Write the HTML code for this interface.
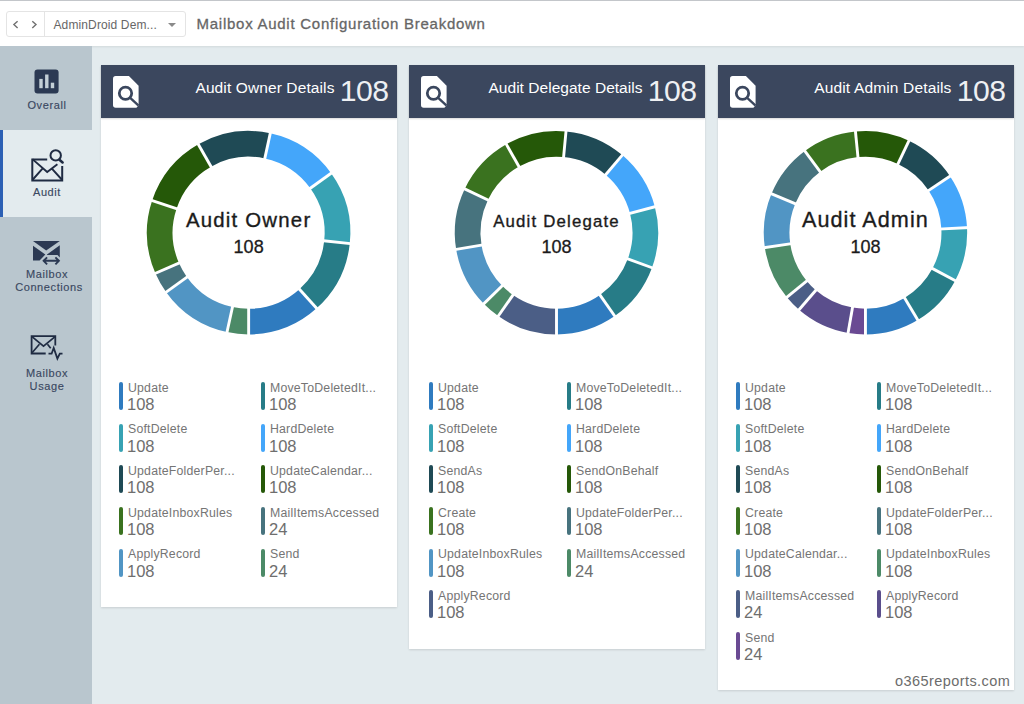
<!DOCTYPE html>
<html><head><meta charset="utf-8">
<style>
*{margin:0;padding:0;box-sizing:border-box}
html,body{width:1024px;height:704px;overflow:hidden;background:#e3ebee;font-family:"Liberation Sans",sans-serif}
.abs{position:absolute}
#topbar{position:absolute;left:0;top:0;width:1024px;height:46px;background:#fff;border-top:1px solid #c3c6ca;box-shadow:0 1px 2px rgba(0,0,0,0.08)}
#nav{position:absolute;left:6px;top:11px;width:180px;height:26px;border:1px solid #e4e4e4;border-radius:3px;background:#fff}
#navdiv{position:absolute;left:44px;top:11px;width:1px;height:26px;background:#e4e4e4}
#ddtext{position:absolute;left:53.5px;top:18.2px;font-size:12px;letter-spacing:0.12px;color:#666;white-space:nowrap}
#ddtri{position:absolute;left:167.8px;top:22.5px;width:0;height:0;border-left:4.7px solid transparent;border-right:4.7px solid transparent;border-top:4.7px solid #8a8a8a}
#title{position:absolute;left:196.5px;top:14.5px;font-size:15px;letter-spacing:0.74px;color:#666;white-space:nowrap;-webkit-text-stroke:0.3px #666}
#side{position:absolute;left:0;top:46px;width:92px;height:658px;background:#b9c6ce}
#sel{position:absolute;left:0;top:130px;width:92px;height:87px;background:#e3ebee}
#selbar{position:absolute;left:0;top:130px;width:3px;height:87px;background:#2c60b4}
.slab{position:absolute;left:1px;width:92px;text-align:center;font-size:11px;letter-spacing:0.6px;line-height:12.5px;color:#3a4861;-webkit-text-stroke:0.15px #3a4861}
.card{position:absolute;top:65px;background:#fff;box-shadow:0 1px 2px rgba(0,0,0,0.12)}
.chead{position:absolute;top:65px;height:53px;background:#3b475e;box-shadow:0 1px 1.5px rgba(0,0,0,0.15)}
.hicon{position:absolute}
.htitle{position:absolute;top:78.5px;font-size:15.5px;letter-spacing:0.28px;color:#fff;white-space:nowrap}
.hnum{position:absolute;top:74px;font-size:30.2px;color:#eef0f3;white-space:nowrap;letter-spacing:-0.5px}
.donut{position:absolute}
.ctitle{position:absolute;width:200px;line-height:1;text-align:center;color:#1b1b1b;white-space:nowrap;-webkit-text-stroke:0.35px #1b1b1b}
.cnum{position:absolute;top:236.5px;width:200px;text-align:center;font-size:18px;color:#1b1b1b;-webkit-text-stroke:0.3px #1b1b1b}
.lbar{position:absolute;width:4px;height:28px;border-radius:2px}
.llab{position:absolute;font-size:12.3px;letter-spacing:0.2px;color:#757575;white-space:nowrap}
.lval{position:absolute;font-size:16.5px;color:#6e6e6e;white-space:nowrap}
#wm{position:absolute;left:895px;top:673px;font-size:14.5px;letter-spacing:0.43px;color:#6c6c6c;white-space:nowrap}
</style></head><body>
<div id="topbar"></div>
<div id="nav"></div>
<div id="navdiv"></div>
<svg class="abs" style="left:12px;top:19px" width="10" height="12" viewBox="0 0 10 12"><path d="M5.6 2.2L1.9 5.6L5.6 9" fill="none" stroke="#707070" stroke-width="1.4"/></svg>
<svg class="abs" style="left:30px;top:19px" width="10" height="12" viewBox="0 0 10 12"><path d="M2.3 2.2L6 5.6L2.3 9" fill="none" stroke="#707070" stroke-width="1.4"/></svg>
<div id="ddtext">AdminDroid Dem...</div>
<div id="ddtri"></div>
<div id="title">Mailbox Audit Configuration Breakdown</div>

<div id="side"></div>
<div id="sel"></div>
<div id="selbar"></div>
<!-- Overall icon -->
<svg class="abs" style="left:34px;top:69px" width="25" height="25" viewBox="0 0 25 25"><rect x="0.5" y="0.5" width="24.1" height="24.1" rx="3" fill="#2b3953"/><rect x="5.3" y="9.9" width="3.4" height="9.3" fill="#c3cfd6"/><rect x="11.1" y="5.5" width="3.4" height="13.7" fill="#c3cfd6"/><rect x="16.8" y="13.7" width="3.4" height="5.5" fill="#c3cfd6"/></svg>
<div class="slab" style="top:98.5px">Overall</div>
<!-- Audit icon -->
<svg class="abs" style="left:28px;top:146px" width="40" height="38" viewBox="0 0 40 38"><path d="M19.2 13.6H4.3V34.5H34.2V20.1" fill="none" stroke="#1f2b42" stroke-width="2"/><path d="M4.4 13.1L19.2 26L29.4 18.2M4.4 34L14.7 22.4M24.1 22.8L34.2 34" fill="none" stroke="#1f2b42" stroke-width="1.9"/><circle cx="27.7" cy="9.4" r="5.2" fill="none" stroke="#1f2b42" stroke-width="2"/><line x1="31.7" y1="13.9" x2="34.6" y2="16.4" stroke="#1f2b42" stroke-width="2.6" stroke-linecap="round"/></svg>
<div class="slab" style="top:186px">Audit</div>
<!-- Connections icon -->
<svg class="abs" style="left:32px;top:240px" width="30" height="26" viewBox="0 0 30 26"><path d="M1 1H27.8L14.2 10.5Z" fill="#2b3953"/><path d="M1 5.8L13.3 14.6L7.6 20.5H1Z" fill="#2b3953"/><path d="M15 14.4L27.8 5.3V17.4L25.5 15.1H15Z" fill="#2b3953"/><path d="M11 20.8H27.5M15.1 17.3L11.6 20.8L15.1 24.3M23.4 17.3L26.9 20.8L23.4 24.3" fill="none" stroke="#2b3953" stroke-width="1.9"/></svg>
<div class="slab" style="top:268px">Mailbox<br><span style="position:relative;left:2px">Connections</span></div>
<!-- Usage icon -->
<svg class="abs" style="left:30px;top:333.6px" width="34" height="28" viewBox="0 0 34 28"><path d="M15.7 19.5H1.6V2.2H25.3V11.5" fill="none" stroke="#1f2b42" stroke-width="1.8"/><path d="M2.3 2.9L13.5 12.2L24.8 2.9M2.1 18.8L9.4 10.2M17.5 10.2L20.7 14.3" fill="none" stroke="#1f2b42" stroke-width="1.7"/><path d="M18.5 19.7H21.6L23.7 14L27.4 24.6L29.8 19.7H32.5" fill="none" stroke="#1f2b42" stroke-width="1.8" stroke-linejoin="miter"/></svg>
<div class="slab" style="top:367px">Mailbox<br>Usage</div>

<div class="card" style="left:101px;width:296px;height:542px"></div>
<div class="chead" style="left:101px;width:296px"></div>
<div class="hicon" style="left:112px;top:74px"><svg width="30" height="36" viewBox="0 0 30 36"><path d="M3.7 2H16.9L26.6 11.7V31.4L24.4 33.8H3.7A2.7 2.7 0 0 1 1 31.1V4.7A2.7 2.7 0 0 1 3.7 2Z" fill="#fff"/><circle cx="13.5" cy="19.25" r="6.2" fill="none" stroke="#3b475e" stroke-width="2.75"/><line x1="18.2" y1="23.9" x2="26.6" y2="31.6" stroke="#3b475e" stroke-width="2.4"/></svg></div>
<div class="htitle" style="right:689.5px;letter-spacing:0.11px">Audit Owner Details</div>
<div class="hnum" style="right:635.5px">108</div>
<svg class="donut" width="1024" height="704" style="left:0;top:0" viewBox="0 0 1024 704"><path d="M248.65 334.40A101.7 101.7 0 0 0 316.61 308.36L299.44 289.24A76.0 76.0 0 0 1 248.65 308.70Z" fill="#2f7bbf"/>
<path d="M316.61 308.36A101.7 101.7 0 0 0 349.77 243.57L324.21 240.82A76.0 76.0 0 0 1 299.44 289.24Z" fill="#277c87"/>
<path d="M349.77 243.57A101.7 101.7 0 0 0 331.14 173.22L310.29 188.25A76.0 76.0 0 0 1 324.21 240.82Z" fill="#37a2b3"/>
<path d="M331.14 173.22A101.7 101.7 0 0 0 270.27 133.32L264.81 158.44A76.0 76.0 0 0 1 310.29 188.25Z" fill="#44a6fa"/>
<path d="M270.27 133.32A101.7 101.7 0 0 0 198.33 144.32L211.04 166.66A76.0 76.0 0 0 1 264.81 158.44Z" fill="#1f4a55"/>
<path d="M198.33 144.32A101.7 101.7 0 0 0 152.16 200.58L176.54 208.70A76.0 76.0 0 0 1 211.04 166.66Z" fill="#255808"/>
<path d="M152.16 200.58A101.7 101.7 0 0 0 155.40 273.29L178.96 263.03A76.0 76.0 0 0 1 176.54 208.70Z" fill="#3a721f"/>
<path d="M155.40 273.29A101.7 101.7 0 0 0 166.16 292.18L187.01 277.15A76.0 76.0 0 0 1 178.96 263.03Z" fill="#47737e"/>
<path d="M166.16 292.18A101.7 101.7 0 0 0 227.03 332.08L232.49 306.96A76.0 76.0 0 0 1 187.01 277.15Z" fill="#5195c4"/>
<path d="M227.03 332.08A101.7 101.7 0 0 0 248.65 334.40L248.65 308.70A76.0 76.0 0 0 1 232.49 306.96Z" fill="#4c8a67"/>
<line x1="248.65" y1="305.70" x2="248.65" y2="337.40" stroke="#fff" stroke-width="2.9"/>
<line x1="297.43" y1="287.01" x2="318.62" y2="310.59" stroke="#fff" stroke-width="2.9"/>
<line x1="321.23" y1="240.50" x2="352.75" y2="243.89" stroke="#fff" stroke-width="2.9"/>
<line x1="307.86" y1="190.00" x2="333.57" y2="171.46" stroke="#fff" stroke-width="2.9"/>
<line x1="264.17" y1="161.37" x2="270.91" y2="130.39" stroke="#fff" stroke-width="2.9"/>
<line x1="212.53" y1="169.26" x2="196.84" y2="141.72" stroke="#fff" stroke-width="2.9"/>
<line x1="179.39" y1="209.64" x2="149.31" y2="199.63" stroke="#fff" stroke-width="2.9"/>
<line x1="181.72" y1="261.83" x2="152.65" y2="274.48" stroke="#fff" stroke-width="2.9"/>
<line x1="189.44" y1="275.40" x2="163.73" y2="293.94" stroke="#fff" stroke-width="2.9"/>
<line x1="233.13" y1="304.03" x2="226.39" y2="335.01" stroke="#fff" stroke-width="2.9"/></svg>
<div class="ctitle" style="left:148.65px;top:209.93px;font-size:20.4px;letter-spacing:1.21px">Audit Owner</div>
<div class="cnum" style="left:148.65px">108</div>
<div class="lbar" style="left:119px;top:382.00px;background:#2f7bbf"></div>
<div class="llab" style="left:128px;top:380.80px">Update</div>
<div class="lval" style="left:127px;top:395.00px">108</div>
<div class="lbar" style="left:261px;top:382.00px;background:#277c87"></div>
<div class="llab" style="left:270px;top:380.80px">MoveToDeletedIt...</div>
<div class="lval" style="left:269px;top:395.00px">108</div>
<div class="lbar" style="left:119px;top:423.65px;background:#37a2b3"></div>
<div class="llab" style="left:128px;top:422.45px">SoftDelete</div>
<div class="lval" style="left:127px;top:436.65px">108</div>
<div class="lbar" style="left:261px;top:423.65px;background:#44a6fa"></div>
<div class="llab" style="left:270px;top:422.45px">HardDelete</div>
<div class="lval" style="left:269px;top:436.65px">108</div>
<div class="lbar" style="left:119px;top:465.30px;background:#1f4a55"></div>
<div class="llab" style="left:128px;top:464.10px">UpdateFolderPer...</div>
<div class="lval" style="left:127px;top:478.30px">108</div>
<div class="lbar" style="left:261px;top:465.30px;background:#255808"></div>
<div class="llab" style="left:270px;top:464.10px">UpdateCalendar...</div>
<div class="lval" style="left:269px;top:478.30px">108</div>
<div class="lbar" style="left:119px;top:506.95px;background:#3a721f"></div>
<div class="llab" style="left:128px;top:505.75px">UpdateInboxRules</div>
<div class="lval" style="left:127px;top:519.95px">108</div>
<div class="lbar" style="left:261px;top:506.95px;background:#47737e"></div>
<div class="llab" style="left:270px;top:505.75px">MailItemsAccessed</div>
<div class="lval" style="left:269px;top:519.95px">24</div>
<div class="lbar" style="left:119px;top:548.60px;background:#5195c4"></div>
<div class="llab" style="left:128px;top:547.40px">ApplyRecord</div>
<div class="lval" style="left:127px;top:561.60px">108</div>
<div class="lbar" style="left:261px;top:548.60px;background:#4c8a67"></div>
<div class="llab" style="left:270px;top:547.40px">Send</div>
<div class="lval" style="left:269px;top:561.60px">24</div>
<div class="card" style="left:409px;width:296px;height:584px"></div>
<div class="chead" style="left:409px;width:296px"></div>
<div class="hicon" style="left:420px;top:74px"><svg width="30" height="36" viewBox="0 0 30 36"><path d="M3.7 2H16.9L26.6 11.7V31.4L24.4 33.8H3.7A2.7 2.7 0 0 1 1 31.1V4.7A2.7 2.7 0 0 1 3.7 2Z" fill="#fff"/><circle cx="13.5" cy="19.25" r="6.2" fill="none" stroke="#3b475e" stroke-width="2.75"/><line x1="18.2" y1="23.9" x2="26.6" y2="31.6" stroke="#3b475e" stroke-width="2.4"/></svg></div>
<div class="htitle" style="right:381.5px;letter-spacing:0.03px">Audit Delegate Details</div>
<div class="hnum" style="right:327.5px">108</div>
<svg class="donut" width="1024" height="704" style="left:0;top:0" viewBox="0 0 1024 704"><path d="M556.50 334.40A101.7 101.7 0 0 0 614.73 316.08L600.01 295.01A76.0 76.0 0 0 1 556.50 308.70Z" fill="#2f7bbf"/>
<path d="M614.73 316.08A101.7 101.7 0 0 0 651.98 267.72L627.85 258.87A76.0 76.0 0 0 1 600.01 295.01Z" fill="#277c87"/>
<path d="M651.98 267.72A101.7 101.7 0 0 0 654.83 206.75L629.98 213.31A76.0 76.0 0 0 1 627.85 258.87Z" fill="#37a2b3"/>
<path d="M654.83 206.75A101.7 101.7 0 0 0 622.26 155.12L605.64 174.73A76.0 76.0 0 0 1 629.98 213.31Z" fill="#44a6fa"/>
<path d="M622.26 155.12A101.7 101.7 0 0 0 566.00 131.44L563.60 157.03A76.0 76.0 0 0 1 605.64 174.73Z" fill="#1f4a55"/>
<path d="M566.00 131.44A101.7 101.7 0 0 0 506.31 144.25L519.00 166.60A76.0 76.0 0 0 1 563.60 157.03Z" fill="#255808"/>
<path d="M506.31 144.25A101.7 101.7 0 0 0 464.71 188.91L487.90 199.98A76.0 76.0 0 0 1 519.00 166.60Z" fill="#3a721f"/>
<path d="M464.71 188.91A101.7 101.7 0 0 0 456.17 249.36L481.53 245.15A76.0 76.0 0 0 1 487.90 199.98Z" fill="#47737e"/>
<path d="M456.17 249.36A101.7 101.7 0 0 0 483.78 303.80L502.16 285.83A76.0 76.0 0 0 1 481.53 245.15Z" fill="#5195c4"/>
<path d="M483.78 303.80A101.7 101.7 0 0 0 498.27 316.08L512.99 295.01A76.0 76.0 0 0 1 502.16 285.83Z" fill="#4c8a67"/>
<path d="M498.27 316.08A101.7 101.7 0 0 0 556.50 334.40L556.50 308.70A76.0 76.0 0 0 1 512.99 295.01Z" fill="#4b5e86"/>
<line x1="556.50" y1="305.70" x2="556.50" y2="337.40" stroke="#fff" stroke-width="2.9"/>
<line x1="598.30" y1="292.55" x2="616.45" y2="318.54" stroke="#fff" stroke-width="2.9"/>
<line x1="625.03" y1="257.84" x2="654.80" y2="268.76" stroke="#fff" stroke-width="2.9"/>
<line x1="627.08" y1="214.07" x2="657.73" y2="205.98" stroke="#fff" stroke-width="2.9"/>
<line x1="603.70" y1="177.01" x2="624.20" y2="152.83" stroke="#fff" stroke-width="2.9"/>
<line x1="563.32" y1="160.02" x2="566.28" y2="128.46" stroke="#fff" stroke-width="2.9"/>
<line x1="520.48" y1="169.21" x2="504.83" y2="141.64" stroke="#fff" stroke-width="2.9"/>
<line x1="490.61" y1="201.27" x2="462.00" y2="187.62" stroke="#fff" stroke-width="2.9"/>
<line x1="484.49" y1="244.66" x2="453.21" y2="249.85" stroke="#fff" stroke-width="2.9"/>
<line x1="504.30" y1="283.73" x2="481.64" y2="305.90" stroke="#fff" stroke-width="2.9"/>
<line x1="514.70" y1="292.55" x2="496.55" y2="318.54" stroke="#fff" stroke-width="2.9"/></svg>
<div class="ctitle" style="left:456.5px;top:214.18px;font-size:16.8px;letter-spacing:1.18px">Audit Delegate</div>
<div class="cnum" style="left:456.5px">108</div>
<div class="lbar" style="left:429px;top:382.00px;background:#2f7bbf"></div>
<div class="llab" style="left:438px;top:380.80px">Update</div>
<div class="lval" style="left:437px;top:395.00px">108</div>
<div class="lbar" style="left:567px;top:382.00px;background:#277c87"></div>
<div class="llab" style="left:576px;top:380.80px">MoveToDeletedIt...</div>
<div class="lval" style="left:575px;top:395.00px">108</div>
<div class="lbar" style="left:429px;top:423.65px;background:#37a2b3"></div>
<div class="llab" style="left:438px;top:422.45px">SoftDelete</div>
<div class="lval" style="left:437px;top:436.65px">108</div>
<div class="lbar" style="left:567px;top:423.65px;background:#44a6fa"></div>
<div class="llab" style="left:576px;top:422.45px">HardDelete</div>
<div class="lval" style="left:575px;top:436.65px">108</div>
<div class="lbar" style="left:429px;top:465.30px;background:#1f4a55"></div>
<div class="llab" style="left:438px;top:464.10px">SendAs</div>
<div class="lval" style="left:437px;top:478.30px">108</div>
<div class="lbar" style="left:567px;top:465.30px;background:#255808"></div>
<div class="llab" style="left:576px;top:464.10px">SendOnBehalf</div>
<div class="lval" style="left:575px;top:478.30px">108</div>
<div class="lbar" style="left:429px;top:506.95px;background:#3a721f"></div>
<div class="llab" style="left:438px;top:505.75px">Create</div>
<div class="lval" style="left:437px;top:519.95px">108</div>
<div class="lbar" style="left:567px;top:506.95px;background:#47737e"></div>
<div class="llab" style="left:576px;top:505.75px">UpdateFolderPer...</div>
<div class="lval" style="left:575px;top:519.95px">108</div>
<div class="lbar" style="left:429px;top:548.60px;background:#5195c4"></div>
<div class="llab" style="left:438px;top:547.40px">UpdateInboxRules</div>
<div class="lval" style="left:437px;top:561.60px">108</div>
<div class="lbar" style="left:567px;top:548.60px;background:#4c8a67"></div>
<div class="llab" style="left:576px;top:547.40px">MailItemsAccessed</div>
<div class="lval" style="left:575px;top:561.60px">24</div>
<div class="lbar" style="left:429px;top:590.25px;background:#4b5e86"></div>
<div class="llab" style="left:438px;top:589.05px">ApplyRecord</div>
<div class="lval" style="left:437px;top:603.25px">108</div>
<div class="card" style="left:718px;width:296px;height:625px"></div>
<div class="chead" style="left:718px;width:296px"></div>
<div class="hicon" style="left:729px;top:74px"><svg width="30" height="36" viewBox="0 0 30 36"><path d="M3.7 2H16.9L26.6 11.7V31.4L24.4 33.8H3.7A2.7 2.7 0 0 1 1 31.1V4.7A2.7 2.7 0 0 1 3.7 2Z" fill="#fff"/><circle cx="13.5" cy="19.25" r="6.2" fill="none" stroke="#3b475e" stroke-width="2.75"/><line x1="18.2" y1="23.9" x2="26.6" y2="31.6" stroke="#3b475e" stroke-width="2.4"/></svg></div>
<div class="htitle" style="right:72.5px;letter-spacing:0.15px">Audit Admin Details</div>
<div class="hnum" style="right:18.5px">108</div>
<svg class="donut" width="1024" height="704" style="left:0;top:0" viewBox="0 0 1024 704"><path d="M865.45 334.40A101.7 101.7 0 0 0 917.74 319.93L904.52 297.89A76.0 76.0 0 0 1 865.45 308.70Z" fill="#2f7bbf"/>
<path d="M917.74 319.93A101.7 101.7 0 0 0 955.15 280.63L932.48 268.52A76.0 76.0 0 0 1 904.52 297.89Z" fill="#277c87"/>
<path d="M955.15 280.63A101.7 101.7 0 0 0 967.03 227.70L941.36 228.96A76.0 76.0 0 0 1 932.48 268.52Z" fill="#37a2b3"/>
<path d="M967.03 227.70A101.7 101.7 0 0 0 950.00 176.18L928.63 190.47A76.0 76.0 0 0 1 941.36 228.96Z" fill="#44a6fa"/>
<path d="M950.00 176.18A101.7 101.7 0 0 0 908.91 140.76L897.93 163.99A76.0 76.0 0 0 1 928.63 190.47Z" fill="#1f4a55"/>
<path d="M908.91 140.76A101.7 101.7 0 0 0 855.46 131.49L857.98 157.07A76.0 76.0 0 0 1 897.93 163.99Z" fill="#255808"/>
<path d="M855.46 131.49A101.7 101.7 0 0 0 804.84 151.03L820.16 171.67A76.0 76.0 0 0 1 857.98 157.07Z" fill="#3a721f"/>
<path d="M804.84 151.03A101.7 101.7 0 0 0 771.48 193.81L795.23 203.64A76.0 76.0 0 0 1 820.16 171.67Z" fill="#47737e"/>
<path d="M771.48 193.81A101.7 101.7 0 0 0 764.86 247.66L790.28 243.88A76.0 76.0 0 0 1 795.23 203.64Z" fill="#5195c4"/>
<path d="M764.86 247.66A101.7 101.7 0 0 0 786.86 297.25L806.72 280.94A76.0 76.0 0 0 1 790.28 243.88Z" fill="#4c8a67"/>
<path d="M786.86 297.25A101.7 101.7 0 0 0 799.04 309.72L815.82 290.26A76.0 76.0 0 0 1 806.72 280.94Z" fill="#4b5e86"/>
<path d="M799.04 309.72A101.7 101.7 0 0 0 848.09 332.91L852.47 307.58A76.0 76.0 0 0 1 815.82 290.26Z" fill="#5a4e8c"/>
<path d="M848.09 332.91A101.7 101.7 0 0 0 865.45 334.40L865.45 308.70A76.0 76.0 0 0 1 852.47 307.58Z" fill="#6a4a93"/>
<line x1="865.45" y1="305.70" x2="865.45" y2="337.40" stroke="#fff" stroke-width="2.9"/>
<line x1="902.98" y1="295.31" x2="919.28" y2="322.50" stroke="#fff" stroke-width="2.9"/>
<line x1="929.83" y1="267.11" x2="957.79" y2="282.05" stroke="#fff" stroke-width="2.9"/>
<line x1="938.36" y1="229.11" x2="970.02" y2="227.55" stroke="#fff" stroke-width="2.9"/>
<line x1="926.14" y1="192.13" x2="952.50" y2="174.52" stroke="#fff" stroke-width="2.9"/>
<line x1="896.65" y1="166.70" x2="910.20" y2="138.04" stroke="#fff" stroke-width="2.9"/>
<line x1="858.28" y1="160.05" x2="855.16" y2="128.51" stroke="#fff" stroke-width="2.9"/>
<line x1="821.95" y1="174.08" x2="803.06" y2="148.62" stroke="#fff" stroke-width="2.9"/>
<line x1="798.00" y1="204.79" x2="768.71" y2="192.66" stroke="#fff" stroke-width="2.9"/>
<line x1="793.24" y1="243.44" x2="761.89" y2="248.10" stroke="#fff" stroke-width="2.9"/>
<line x1="809.04" y1="279.03" x2="784.54" y2="299.15" stroke="#fff" stroke-width="2.9"/>
<line x1="817.78" y1="287.98" x2="797.08" y2="311.99" stroke="#fff" stroke-width="2.9"/>
<line x1="852.99" y1="304.63" x2="847.57" y2="335.86" stroke="#fff" stroke-width="2.9"/></svg>
<div class="ctitle" style="left:765.45px;top:208.92px;font-size:21.6px;letter-spacing:1.05px">Audit Admin</div>
<div class="cnum" style="left:765.45px">108</div>
<div class="lbar" style="left:736px;top:382.00px;background:#2f7bbf"></div>
<div class="llab" style="left:745px;top:380.80px">Update</div>
<div class="lval" style="left:744px;top:395.00px">108</div>
<div class="lbar" style="left:877px;top:382.00px;background:#277c87"></div>
<div class="llab" style="left:886px;top:380.80px">MoveToDeletedIt...</div>
<div class="lval" style="left:885px;top:395.00px">108</div>
<div class="lbar" style="left:736px;top:423.65px;background:#37a2b3"></div>
<div class="llab" style="left:745px;top:422.45px">SoftDelete</div>
<div class="lval" style="left:744px;top:436.65px">108</div>
<div class="lbar" style="left:877px;top:423.65px;background:#44a6fa"></div>
<div class="llab" style="left:886px;top:422.45px">HardDelete</div>
<div class="lval" style="left:885px;top:436.65px">108</div>
<div class="lbar" style="left:736px;top:465.30px;background:#1f4a55"></div>
<div class="llab" style="left:745px;top:464.10px">SendAs</div>
<div class="lval" style="left:744px;top:478.30px">108</div>
<div class="lbar" style="left:877px;top:465.30px;background:#255808"></div>
<div class="llab" style="left:886px;top:464.10px">SendOnBehalf</div>
<div class="lval" style="left:885px;top:478.30px">108</div>
<div class="lbar" style="left:736px;top:506.95px;background:#3a721f"></div>
<div class="llab" style="left:745px;top:505.75px">Create</div>
<div class="lval" style="left:744px;top:519.95px">108</div>
<div class="lbar" style="left:877px;top:506.95px;background:#47737e"></div>
<div class="llab" style="left:886px;top:505.75px">UpdateFolderPer...</div>
<div class="lval" style="left:885px;top:519.95px">108</div>
<div class="lbar" style="left:736px;top:548.60px;background:#5195c4"></div>
<div class="llab" style="left:745px;top:547.40px">UpdateCalendar...</div>
<div class="lval" style="left:744px;top:561.60px">108</div>
<div class="lbar" style="left:877px;top:548.60px;background:#4c8a67"></div>
<div class="llab" style="left:886px;top:547.40px">UpdateInboxRules</div>
<div class="lval" style="left:885px;top:561.60px">108</div>
<div class="lbar" style="left:736px;top:590.25px;background:#4b5e86"></div>
<div class="llab" style="left:745px;top:589.05px">MailItemsAccessed</div>
<div class="lval" style="left:744px;top:603.25px">24</div>
<div class="lbar" style="left:877px;top:590.25px;background:#5a4e8c"></div>
<div class="llab" style="left:886px;top:589.05px">ApplyRecord</div>
<div class="lval" style="left:885px;top:603.25px">108</div>
<div class="lbar" style="left:736px;top:631.90px;background:#6a4a93"></div>
<div class="llab" style="left:745px;top:630.70px">Send</div>
<div class="lval" style="left:744px;top:644.90px">24</div>
<div id="wm">o365reports.com</div>
</body></html>
